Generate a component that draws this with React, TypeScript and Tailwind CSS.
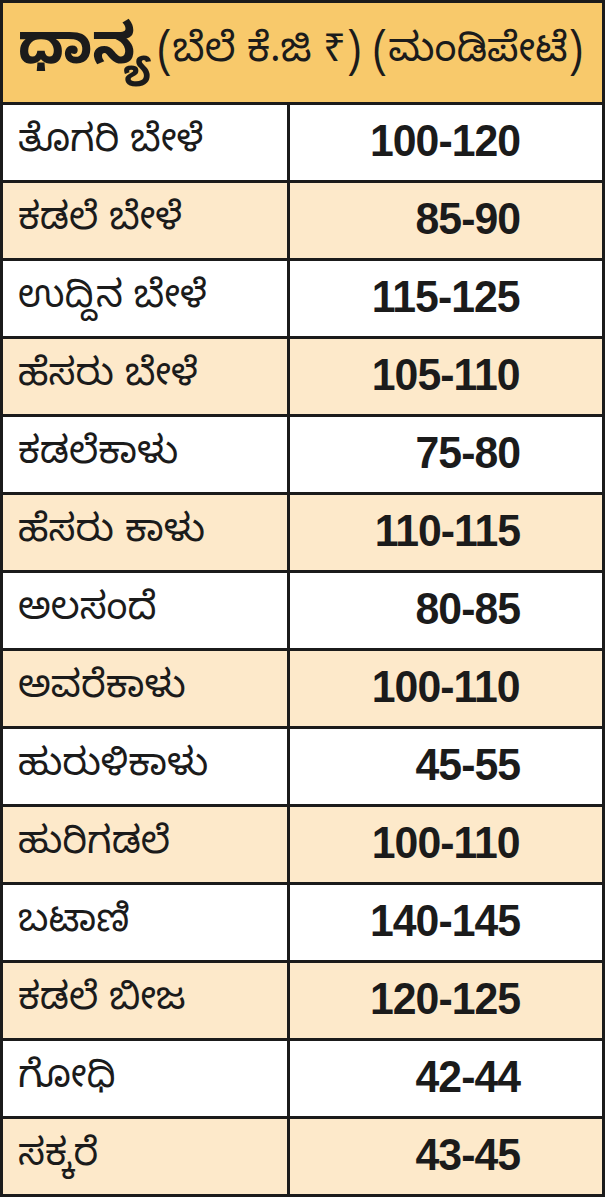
import React from "react";

const rows: [string, string][] = [
  ["ತೊಗರಿ ಬೇಳೆ", "100-120"],
  ["ಕಡಲೆ ಬೇಳೆ", "85-90"],
  ["ಉದ್ದಿನ ಬೇಳೆ", "115-125"],
  ["ಹೆಸರು ಬೇಳೆ", "105-110"],
  ["ಕಡಲೆಕಾಳು", "75-80"],
  ["ಹೆಸರು ಕಾಳು", "110-115"],
  ["ಅಲಸಂದೆ", "80-85"],
  ["ಅವರೆಕಾಳು", "100-110"],
  ["ಹುರುಳಿಕಾಳು", "45-55"],
  ["ಹುರಿಗಡಲೆ", "100-110"],
  ["ಬಟಾಣಿ", "140-145"],
  ["ಕಡಲೆ ಬೀಜ", "120-125"],
  ["ಗೋಧಿ", "42-44"],
  ["ಸಕ್ಕರೆ", "43-45"],
];

const kn = "font-['Noto_Sans_Kannada','Noto_Sans','Lohit_Kannada',sans-serif]";

export default function App() {
  return (
    <div className="w-[605px] h-[1200px] bg-white">
      <div className="border-[3px] border-[#1b1b1b] text-[#1b1b1b]">
        {/* ತಲೆಬರಹ */}
        <div className={`h-[99px] bg-[#f8c96b] flex items-center pl-[15px] pt-[6px] ${kn}`}>
          <span className="text-[56px] font-bold leading-none">ಧಾನ್ಯ</span>
          <span className="text-[40px] leading-none ml-[6px]">(ಬೆಲೆ ಕೆ.ಜಿ ₹) (ಮಂಡಿಪೇಟೆ)</span>
        </div>
        {rows.map(([name, price], i) => (
          <div
            key={name}
            className={`grid grid-cols-[287px_1fr] h-[78px] border-t-[3px] border-[#1b1b1b] ${i % 2 === 1 ? "bg-[#fde9ca]" : "bg-white"}`}
          >
            <div className={`flex items-center pl-[15px] pt-[6px] text-[38px] leading-none border-r-[3px] border-[#1b1b1b] ${kn}`}>
              {name}
            </div>
            <div className="flex items-center justify-end pr-[82px] pb-[5px] font-['Liberation_Sans',sans-serif] font-bold text-[45px] leading-none tracking-[-1px]">
              <span className="inline-block scale-x-[0.95] origin-right">{price}</span>
            </div>
          </div>
        ))}
      </div>
    </div>
  );
}
